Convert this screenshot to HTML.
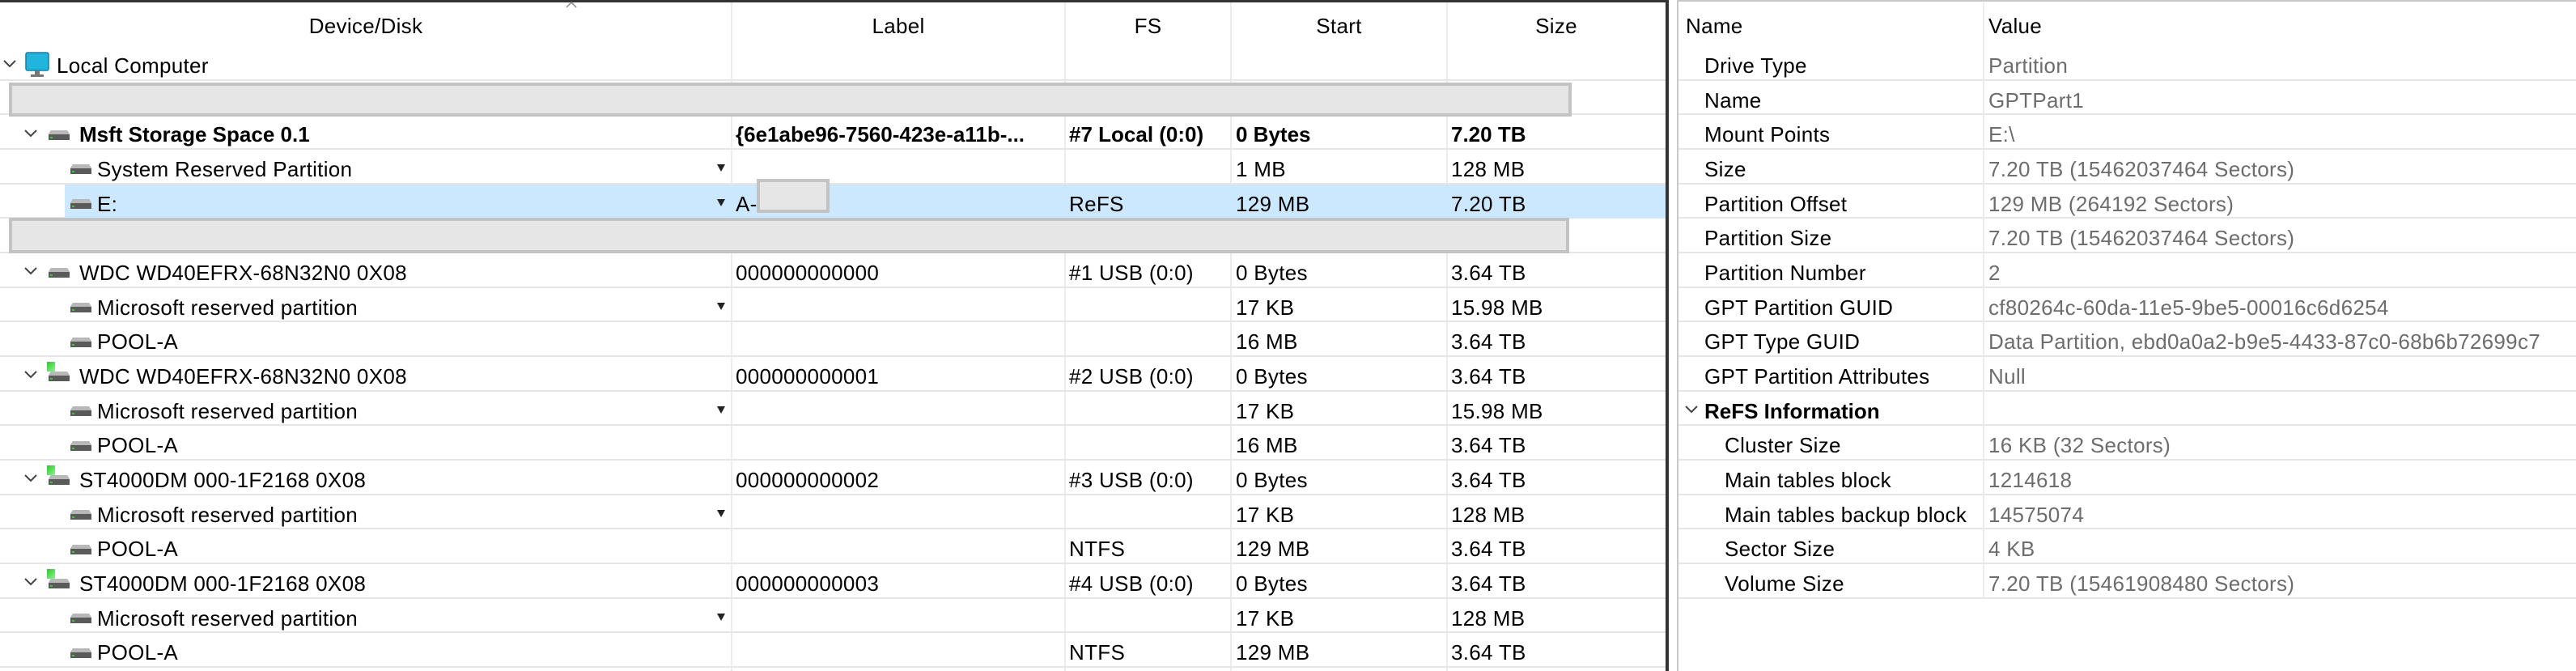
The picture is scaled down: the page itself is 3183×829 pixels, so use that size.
<!DOCTYPE html>
<html><head><meta charset="utf-8"><style>
*{margin:0;padding:0;box-sizing:border-box}
body{width:3183px;height:829px;background:#fff;position:relative;overflow:hidden;font-family:"Liberation Sans",sans-serif;font-size:26px;color:#000}
.a{position:absolute;white-space:nowrap}
.hl{position:absolute;height:2px;background:#e6e6e6}
.vl{position:absolute;width:2px;background:#ececec}
.t{position:absolute;white-space:nowrap;line-height:42px;height:42px;margin-top:3px;letter-spacing:0.3px}
.b{font-weight:bold;letter-spacing:0}
.g{color:#6d6d6d}
.bar{position:absolute;background:#e6e6e6;border:4px solid #c3c3c3}
.drv{position:absolute;width:28px;height:14px}
</style></head><body>
<div class="a" style="left:0;top:0;width:2062px;height:3px;background:#333"></div>
<div class="a" style="left:2058px;top:0;width:4px;height:829px;background:#333"></div>
<div class="a" style="left:2072px;top:0;width:2px;height:829px;background:#c8c8c8"></div>
<div class="a" style="left:2074px;top:0;width:1109px;height:2px;background:#c8c8c8"></div>

<svg class="a" style="left:699px;top:2px" width="14" height="8" viewBox="0 0 14 8"><path d="M1 7l6-6 6 6" fill="none" stroke="#888" stroke-width="1.5"/></svg>
<div class="t" style="left:0;width:904px;top:8px;text-align:center">Device/Disk</div>
<div class="t" style="left:904px;width:412px;top:8px;text-align:center">Label</div>
<div class="t" style="left:1316px;width:205px;top:8px;text-align:center">FS</div>
<div class="t" style="left:1521px;width:267px;top:8px;text-align:center">Start</div>
<div class="t" style="left:1788px;width:270px;top:8px;text-align:center">Size</div>
<div class="t" style="left:2083px;top:8px">Name</div>
<div class="t" style="left:2457px;top:8px">Value</div>

<div class="vl" style="left:903px;top:3px;height:826px"></div>
<div class="vl" style="left:1315px;top:3px;height:826px"></div>
<div class="vl" style="left:1520px;top:3px;height:826px"></div>
<div class="vl" style="left:1787px;top:3px;height:826px"></div>
<div class="vl" style="left:2450px;top:3px;height:735px"></div>

<div id="rows"></div>

<script>
(function(){
var H=42.67,T=57;
var L=[
["Local Computer",0,"","","","",""],
[null],
["Msft Storage Space 0.1",1,"{6e1abe96-7560-423e-a11b-...","#7 Local (0:0)","0 Bytes","7.20 TB","bold"],
["System Reserved Partition",2,"","","1 MB","128 MB","dd"],
["E:",2,"A-","ReFS","129 MB","7.20 TB","sel"],
[null],
["WDC WD40EFRX-68N32N0 0X08",1,"000000000000","#1 USB (0:0)","0 Bytes","3.64 TB",""],
["Microsoft reserved partition",2,"","","17 KB","15.98 MB","dd"],
["POOL-A",2,"","","16 MB","3.64 TB",""],
["WDC WD40EFRX-68N32N0 0X08",1,"000000000001","#2 USB (0:0)","0 Bytes","3.64 TB","flag"],
["Microsoft reserved partition",2,"","","17 KB","15.98 MB","dd"],
["POOL-A",2,"","","16 MB","3.64 TB",""],
["ST4000DM 000-1F2168 0X08",1,"000000000002","#3 USB (0:0)","0 Bytes","3.64 TB","flag"],
["Microsoft reserved partition",2,"","","17 KB","128 MB","dd"],
["POOL-A",2,"","NTFS","129 MB","3.64 TB",""],
["ST4000DM 000-1F2168 0X08",1,"000000000003","#4 USB (0:0)","0 Bytes","3.64 TB","flag"],
["Microsoft reserved partition",2,"","","17 KB","128 MB","dd"],
["POOL-A",2,"","NTFS","129 MB","3.64 TB",""]
];
var R=[
["Drive Type","Partition",0],["Name","GPTPart1",0],["Mount Points","E:\\",0],
["Size","7.20 TB (15462037464 Sectors)",0],["Partition Offset","129 MB (264192 Sectors)",0],
["Partition Size","7.20 TB (15462037464 Sectors)",0],["Partition Number","2",0],
["GPT Partition GUID","cf80264c-60da-11e5-9be5-00016c6d6254",0],
["GPT Type GUID","Data Partition, ebd0a0a2-b9e5-4433-87c0-68b6b72699c7",0],
["GPT Partition Attributes","Null",0],["ReFS Information","",1],
["Cluster Size","16 KB (32 Sectors)",2],["Main tables block","1214618",2],
["Main tables backup block","14575074",2],["Sector Size","4 KB",2],
["Volume Size","7.20 TB (15461908480 Sectors)",2]
];
function drive(x,y,flag){
 var s='<svg class="drv" style="left:'+x+'px;top:'+y+'px" width="28" height="14" viewBox="0 0 28 14"><path d="M4 1h20l3 5v7H1V6z" fill="#5a5a5a"/><path d="M4 1h20l3 5H1z" fill="#b8b8b8"/><rect x="3" y="9" width="3" height="2" fill="#3c3"/></svg>';
 if(flag) s+='<div class="a" style="left:'+(x-1)+'px;top:'+(y-11)+'px;width:10px;height:12px;background:linear-gradient(135deg,#2c2 0%,#9e9 100%)"></div>';
 return s;
}
function chev(x,y){return '<svg class="a" style="left:'+x+'px;top:'+y+'px" width="16" height="10" viewBox="0 0 16 10"><path d="M1 1l7 7 7-7" fill="none" stroke="#444" stroke-width="2"/></svg>';}
var h='';
for(var i=0;i<18;i++){
 var yy=T+i*H, r=L[i];
 h+='<div class="hl" style="left:0;width:2058px;top:'+(yy+H-2)+'px"></div>';
 if(r[0]===null)continue;
 var cy=yy+H/2;
 if(r[6]=="sel") h+='<div class="a" style="left:80px;width:1978px;top:'+yy+'px;height:'+(H-1)+'px;background:#cce8ff"></div>';
 var tx;
 if(r[1]==0){
  h+=chev(4,cy-4);
  h+='<svg class="a" style="left:31px;top:'+(cy-14)+'px" width="30" height="32" viewBox="0 0 30 32"><rect x="1" y="1" width="28" height="22" rx="2" fill="#1fb5dc"/><rect x="1" y="1" width="28" height="22" rx="2" fill="none" stroke="#177fa8" stroke-width="1.5"/><rect x="12" y="23" width="6" height="5" fill="#777"/><rect x="7" y="28" width="16" height="3" fill="#777"/></svg>';
  tx=70;
 } else if(r[1]==1){
  h+=chev(30,cy-4); h+=drive(59,cy-4,r[6]=="flag"); tx=98;
 } else { h+=drive(86,cy-4,false); tx=120; }
 var cl=r[6]=="bold"?" b":"";
 h+='<div class="t'+cl+'" style="left:'+tx+'px;top:'+yy+'px">'+r[0]+'</div>';
 if(r[6]=="dd"||r[6]=="sel") h+='<div class="a" style="left:886px;top:'+(cy-3)+'px;width:0;height:0;border-left:5px solid transparent;border-right:5px solid transparent;border-top:9px solid #222"></div>';
 h+='<div class="t'+cl+'" style="left:909px;top:'+yy+'px">'+r[2]+'</div>';
 h+='<div class="t'+cl+'" style="left:1321px;top:'+yy+'px">'+r[3]+'</div>';
 h+='<div class="t'+cl+'" style="left:1527px;top:'+yy+'px">'+r[4]+'</div>';
 h+='<div class="t'+cl+'" style="left:1793px;top:'+yy+'px">'+r[5]+'</div>';
}
h+='<div class="bar" style="left:11px;width:1931px;top:102px;height:42px"></div>';
h+='<div class="bar" style="left:11px;width:1928px;top:269px;height:44px"></div>';
h+='<div class="a" style="left:935px;width:90px;top:221px;height:42px;background:#e6e6e6;border:4px solid #c3c3c3"></div>';
for(var j=0;j<R.length;j++){
 var yy=T+j*H, r=R[j];
 h+='<div class="hl" style="left:2074px;width:1109px;top:'+(yy+H-2)+'px"></div>';
 if(r[2]==1){ h+=chev(2082,yy+H/2-4); h+='<div class="t b" style="left:2106px;top:'+yy+'px">'+r[0]+'</div>'; }
 else h+='<div class="t" style="left:'+(r[2]==2?2131:2106)+'px;top:'+yy+'px">'+r[0]+'</div>';
 h+='<div class="t g" style="left:2457px;top:'+yy+'px">'+r[1]+'</div>';
}
document.getElementById('rows').innerHTML=h;
})();
</script>
</body></html>
